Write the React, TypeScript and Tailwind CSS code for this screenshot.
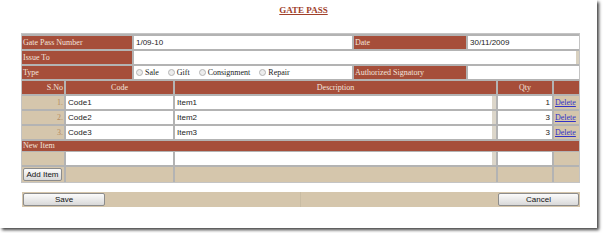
import React from "react";

const serif = "font-['Liberation_Serif',serif]";
const sans = "font-['Liberation_Sans',Arial,sans-serif]";

function Label({ w, children, className = "" }: { w: string; children?: React.ReactNode; className?: string }) {
  return (
    <div className={`${w} h-full bg-[#a64e3a] text-[#f3e4dc] text-[8px] leading-none ${serif} flex items-center px-[1px] ${className}`}>
      {children}
    </div>
  );
}

function White({ w, children, className = "" }: { w: string; children?: React.ReactNode; className?: string }) {
  return (
    <div className={`${w} h-full bg-white text-[8px] leading-none ${sans} text-[#222] flex items-center px-[2px] ${className}`}>
      {children}
    </div>
  );
}

function Tan({ w, children, className = "" }: { w: string; children?: React.ReactNode; className?: string }) {
  return <div className={`${w} h-full bg-[#d5c6ac] flex items-center ${className}`}>{children}</div>;
}

function Radio({ label }: { label: string }) {
  return (
    <span className="flex items-center gap-[2px] mr-[9px]">
      <span className="w-[7px] h-[7px] rounded-full border border-[#b5b5b5] bg-[#ececec]" />
      <span className={`${serif} text-[8px] text-[#222]`}>{label}</span>
    </span>
  );
}

function Btn({ w, children }: { w: string; children: React.ReactNode }) {
  return (
    <div
      className={`${w} h-[13px] border border-[#8c8c8c] rounded-[2px] bg-gradient-to-b from-[#fbfbfb] to-[#d9d9d9] ${sans} text-[8px] leading-none text-[#111] flex items-center justify-center`}
    >
      {children}
    </div>
  );
}

function DescCell({ children }: { children?: React.ReactNode }) {
  return (
    <div className="w-[321px] h-full flex">
      <div className={`flex-1 h-full bg-white ${sans} text-[8px] leading-none text-[#222] flex items-center px-[2px]`}>{children}</div>
      <div className="w-[4px] h-full bg-[#dcd6ca]" />
    </div>
  );
}

const items = [
  { n: 1, code: "Code1", item: "Item1", qty: 1 },
  { n: 2, code: "Code2", item: "Item2", qty: 3 },
  { n: 3, code: "Code3", item: "Item3", qty: 3 },
];

export default function App() {
  return (
    <div className="w-[603px] h-[233px] bg-white overflow-hidden">
      <div className="w-[597px] h-[228px] bg-white shadow-[2px_2px_3px_rgba(0,0,0,0.75)] flex flex-col">
        <div className="h-[33px] pt-[6px] pl-[10px] flex justify-center">
          <span className={`${serif} font-bold text-[9px] leading-none text-[#a0402a] underline`}>GATE PASS</span>
        </div>

        <div className="ml-[21px] w-[559px] bg-[#b3b3b3] border border-[#c4c4c4] pt-[2px] flex flex-col gap-[2px]">
          <div className="h-[13px] flex gap-[2px]">
            <Label w="w-[110px]">Gate Pass Number</Label>
            <White w="w-[218px]">1/09-10</White>
            <Label w="w-[112px]">Date</Label>
            <White w="w-[111px]">30/11/2009</White>
          </div>
          <div className="h-[13px] flex gap-[2px]">
            <Label w="w-[110px]">Issue To</Label>
            <div className="w-[445px] h-full flex">
              <div className="flex-1 bg-white" />
              <div className="w-[3px] bg-[#d9d1c0]" />
            </div>
          </div>
          <div className="h-[13px] flex gap-[2px]">
            <Label w="w-[110px]">Type</Label>
            <White w="w-[218px]" className="pl-[2px]">
              <Radio label="Sale" />
              <Radio label="Gift" />
              <Radio label="Consignment" />
              <Radio label="Repair" />
            </White>
            <Label w="w-[112px]">Authorized Signatory</Label>
            <White w="w-[111px]" />
          </div>
          <div className="h-[13px] flex gap-[2px]">
            <Label w="w-[42px]" className="justify-end">S.No</Label>
            <Label w="w-[107px]" className="justify-center">Code</Label>
            <Label w="w-[321px]" className="justify-center">Description</Label>
            <Label w="w-[54px]" className="justify-center">Qty</Label>
            <Label w="w-[25px]" />
          </div>
          {items.map((it) => (
            <div key={it.n} className="h-[13px] flex gap-[2px]">
              <Tan w="w-[42px]" className={`justify-end pr-[1px] ${serif} text-[8px] leading-none text-[#b58b62]`}>
                {it.n}.
              </Tan>
              <White w="w-[107px]">{it.code}</White>
              <DescCell>{it.item}</DescCell>
              <White w="w-[54px]" className="justify-end">{it.qty}</White>
              <Tan w="w-[25px]" className="pl-[1px]">
                <span className={`${serif} text-[8px] leading-none text-[#3232c8] underline`}>Delete</span>
              </Tan>
            </div>
          ))}
          <div className="h-[10px] -mb-[1px]">
            <Label w="w-full">New Item</Label>
          </div>
          <div className="h-[13px] flex gap-[2px]">
            <Tan w="w-[42px]" />
            <White w="w-[107px]" />
            <DescCell />
            <White w="w-[54px]" />
            <Tan w="w-[25px]" />
          </div>
          <div className="h-[15px] flex gap-[2px]">
            <Tan w="w-[42px]" className="pl-[1px]">
              <Btn w="w-[39px]">Add Item</Btn>
            </Tan>
            <Tan w="w-[107px]" />
            <Tan w="w-[321px]" />
            <Tan w="w-[54px]" />
            <Tan w="w-[25px]" />
          </div>
        </div>

        <div className="mt-[9px] ml-[22px] w-[558px] h-[15px] flex gap-[1px] bg-[#c9bca3]">
          <div className="w-[278px] h-full bg-[#d5c6ac] flex items-center pl-[1px]">
            <Btn w="w-[82px]">Save</Btn>
          </div>
          <div className="flex-1 h-full bg-[#d5c6ac] flex items-center justify-end pr-[1px]">
            <Btn w="w-[81px]">Cancel</Btn>
          </div>
        </div>
      </div>
    </div>
  );
}
